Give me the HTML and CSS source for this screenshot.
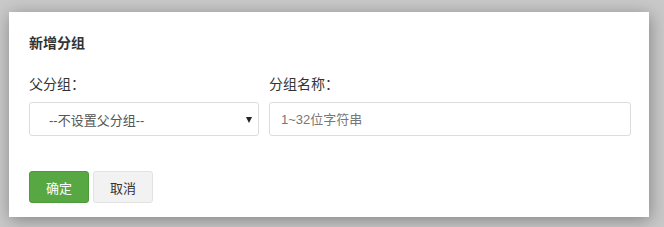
FILE: index.html
```html
<!DOCTYPE html>
<html>
  <head>
    <meta charset="UTF-8" />
    <title>新增分组</title>
    <link rel="stylesheet" href="styles.css">
  </head>
  <body>
    <div class="dialog">
      <h3 class="title">新增分组</h3>
      <div class="fields">
        <div class="field">
          <label class="label">父分组：</label>
          <div class="select">
            <span>--不设置父分组--</span>
            <span class="arrow"></span>
          </div>
        </div>
        <div class="field">
          <label class="label">分组名称：</label>
          <input class="input" type="text" placeholder="1~32位字符串" />
        </div>
      </div>
      <div class="actions">
        <button class="btn btnOk">确定</button>
        <button class="btn btnCancel">取消</button>
      </div>
    </div>
  </body>
</html>
```

FILE: styles.css
```css
* {
  margin: 0;
  padding: 0;
  box-sizing: border-box;
}
body {
  background-color: #c9c9c9;
  font-family: "Liberation Sans", "Noto Sans CJK SC", sans-serif;
  color: #333;
  padding: 12px 15px 0 9px;
  height: 227px;
  overflow: hidden;
}
.dialog {
  width: 640px;
  height: 205px;
  background-color: #fff;
  padding: 21px 18px 0 20px;
  box-shadow: 1px 3px 16px rgba(0, 0, 0, 0.35);
}
.title {
  font-size: 14px;
  font-weight: bold;
  line-height: 20px;
  height: 20px;
  color: #333;
}
.fields {
  display: grid;
  grid-template-columns: 230px 1fr;
  column-gap: 10px;
  margin-top: 21px;
}
.label {
  display: block;
  font-size: 14px;
  line-height: 20px;
  height: 20px;
  margin-bottom: 8px;
  color: #333;
}
.select,
.input {
  height: 34px;
  border: 1px solid #dcdcdc;
  border-radius: 3px;
  font-family: inherit;
  font-size: 13px;
  color: #555;
}
.select {
  display: flex;
  align-items: center;
  justify-content: space-between;
  padding: 0 6px 0 19px;
}
.arrow {
  width: 0;
  height: 0;
  border-left: 3.5px solid transparent;
  border-right: 3.5px solid transparent;
  border-top: 6px solid #222;
  margin-top: 1px;
}
.input {
  width: 100%;
  padding: 0 11px;
  outline: none;
}
.input::placeholder {
  color: #777;
}
.actions {
  display: flex;
  gap: 4px;
  margin-top: 35px;
}
.btn {
  width: 60px;
  height: 32px;
  border-radius: 3px;
  font-family: inherit;
  font-size: 13px;
  cursor: pointer;
}
.btnOk {
  background-color: #57a743;
  border: 1px solid #4c9a3a;
  color: #fff;
}
.btnCancel {
  background-color: #f2f2f2;
  border: 1px solid #e2e2e2;
  color: #333;
}
```
